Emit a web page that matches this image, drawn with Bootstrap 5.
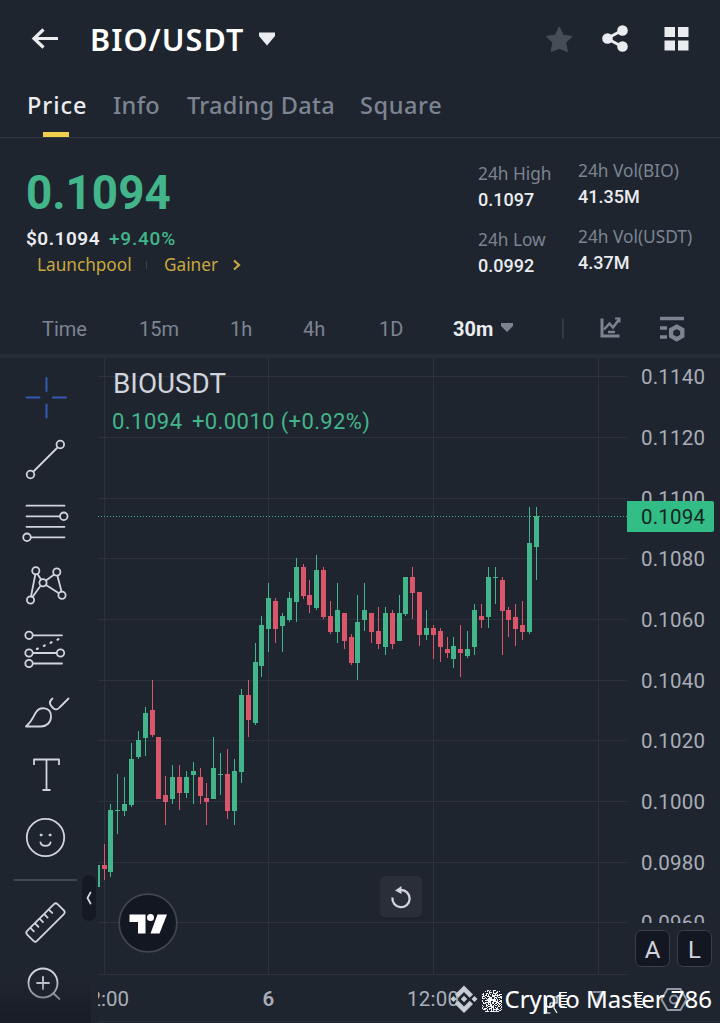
<!DOCTYPE html>
<html lang="en">
<head>
<meta charset="utf-8">
<meta name="viewport" content="width=device-width, initial-scale=1">
<title>BIO/USDT</title>
<link href="https://cdn.jsdelivr.net/npm/bootstrap@5.3.0/dist/css/bootstrap.min.css" rel="stylesheet">
<style>
  :root { --bg:#1f252f; --up:#42b68a; --down:#da566a; --muted:#7d8491; --ink:#eaecef; --icon:#d1d4dc; }
  html, body { height:1023px; overflow:hidden; }
  body { width:720px; background:var(--bg); color:var(--ink); font-family:"Noto Sans","Liberation Sans",sans-serif; }
  svg { display:block; flex:none; }
  .t { white-space:nowrap; flex:none; }
  .topbar { height:78px; padding-left:31px; padding-right:31px; }
  .pair { font-size:30.5px; font-weight:600; line-height:44px; margin-left:31px; width:155px; color:#fff; letter-spacing:1.05px; }
  .tabs { height:60px; padding-left:27px; border-bottom:1px solid #313741; font-size:23.5px; font-weight:500; color:var(--muted); line-height:34px; padding-top:10px; letter-spacing:.3px; }
  .tabs .on { color:var(--ink); letter-spacing:.95px; }
  .bar-on { width:26px; height:5px; background:#f0cf4f; left:16px; top:44px; }
  .summary { height:162px; }
  .price { font-family:Roboto,sans-serif; font-weight:700; font-size:49px; line-height:58px; color:var(--up); margin-top:26px; height:58px; width:160px; transform:scaleX(.935); transform-origin:0 50%; }
  .sub { font-size:19px; line-height:26px; font-weight:600; font-family:Roboto,sans-serif; margin-top:4px; }
  .up { color:var(--up); font-weight:500; }
  .tags { font-size:17.2px; line-height:26px; color:#c9a83f; padding-left:11px; margin-top:0; }
  .tag-sep { width:1px; height:8px; background:#3a414c; }
  .stat-l { font-size:17.3px; line-height:26px; color:var(--muted); }
  .stat-v { font-size:18px; line-height:26px; font-weight:500; font-family:Roboto,sans-serif; height:40px; }
  .intervals { height:55px; padding-top:2px; color:var(--muted); font-size:20px; line-height:30px; font-family:Roboto,"Noto Sans",sans-serif; }
  .s1 { width:83px; letter-spacing:.5px; } .s2 { letter-spacing:.8px; } .g1 { width:109px; } .g2 { margin-left:17px; width:68px; }
  .i1 { margin-left:42px; width:97px; } .i2 { width:91px; } .i3 { width:73px; } .i4 { width:76px; } .i5 { width:74px; }
  .i6 { width:47px; font-weight:700; color:var(--ink); }
  .board { height:668px; }
  .tools { width:98px; padding-top:11px; }
  .tools::after { content:""; left:0; bottom:0; width:91px; height:46px; position:absolute; background:linear-gradient(#171b2400,#171b24e8); pointer-events:none; }
  .tools svg { fill:none; stroke:var(--icon); stroke-width:1.8; stroke-linecap:round; stroke-linejoin:round; }
  .fold { left:82px; top:520px; width:14px; height:46px; border-radius:7px; background:#141923; }
  svg text { font-family:Roboto,sans-serif; }
  .seam { left:0; top:354px; width:720px; height:4px; background:#272d37; }
  .wm { left:444px; top:980px; }
  .wm text { font-family:"Noto Sans","Liberation Sans",sans-serif; }
</style>
</head>
<body class="position-relative">

<header class="topbar d-flex align-items-center">
  <svg width="28" height="24" viewBox="31 27 28 24" fill="none" stroke="#eaecef" stroke-width="3.2"><path d="M58 38.5H34M43.5 29.5l-9.5 9 9.5 9"/></svg>
  <div class="t pair">BIO/USDT</div>
  <svg style="margin-left:13px" width="18" height="16" viewBox="258 31 18 16"><path d="M259 32.5h16v3.500L267 45.500L259 36z" fill="#eaecef"/></svg>
  <svg class="ms-auto" width="30" height="30" viewBox="544 24 30 30"><path d="M559.300 27l4 8.200 8.800 1.200-6.400 6.200 1.700 9-8.100-3.200-8.100 3.200 1.700-9-6.400-6.200 8.800-1.200z" fill="#474d57" stroke="#474d57" stroke-linejoin="round"/></svg>
  <svg style="margin-left:27px" width="30" height="30" viewBox="601 24 30 30" fill="#eaecef"><path d="M622 30.500L607 38.500l15 8" fill="none" stroke="#eaecef" stroke-width="3"/><circle cx="622.500" cy="30.500" r="5.300"/><circle cx="607.500" cy="38.500" r="5.300"/><circle cx="622.500" cy="46.500" r="5.300"/></svg>
  <svg style="margin-left:33px" width="25" height="26" viewBox="664 26 25 26" fill="#eaecef"><path d="M664.500 27h10.500v10h-10.500zM678 27h10.500v10H678zM664.500 40.500h10.500v10h-10.500zM678 40.500h10.500v10H678z"/></svg>
</header>

<nav class="tabs d-flex">
  <div class="t on position-relative" style="width:86px">Price<span class="bar-on position-absolute"></span></div>
  <div class="t" style="width:74px">Info</div>
  <div class="t" style="width:173px">Trading Data</div>
  <div class="t" style="letter-spacing:.6px">Square</div>
</nav>

<section class="summary d-flex">
  <div style="width:478px;padding-left:26px">
    <div class="price t">0.1094</div>
    <div class="sub d-flex"><span class="t s1">$0.1094</span><span class="t up s2">+9.40%</span></div>
    <div class="tags d-flex align-items-center"><span class="t g1">Launchpool</span><span class="tag-sep"></span><span class="t g2">Gainer</span>
      <svg width="10" height="12" viewBox="0 0 10 12" fill="none" stroke="#c9a83f" stroke-width="2.200"><path d="M2 1.500L7 6l-5 4.500"/></svg></div>
  </div>
  <div style="width:100px;padding-top:23px">
    <div class="t stat-l">24h High</div><div class="t stat-v">0.1097</div>
    <div class="t stat-l">24h Low</div><div class="t stat-v">0.0992</div>
  </div>
  <div style="padding-top:20px">
    <div class="t stat-l">24h Vol(BIO)</div><div class="t stat-v">41.35M</div>
    <div class="t stat-l">24h Vol(USDT)</div><div class="t stat-v">4.37M</div>
  </div>
</section>

<section class="intervals d-flex align-items-center">
  <span class="t i1">Time</span><span class="t i2">15m</span><span class="t i3">1h</span><span class="t i4">4h</span><span class="t i5">1D</span><span class="t i6">30m</span>
  <svg width="220" height="40" viewBox="500 308.500 220 40">
    <path d="M501 322.500h12v3l-6 6-6-6z" fill="#7d8491"/>
    <path d="M563 318v20" stroke="#3a414c" stroke-width="1.500"/>
    <g fill="none" stroke="#7d8491" stroke-width="3"><path d="M602 318v17.500h17.500"/><path d="M604 329l5.500-6 3.500 4 6-8" stroke-width="2.500"/><path d="M615 318h4.500v4" stroke-width="2"/><path d="M608 331.500h7" stroke-width="2.500"/><path d="M660 318h24M660 327.500h7M660 336.500h7" stroke-width="3.600"/><path d="M676.700 326.200l5.600 3.100v6.300l-5.600 3.100-5.600-3.100v-6.300z" stroke-width="4.300"/></g>
  </svg>
</section>

<main class="board d-flex">
  <aside class="tools position-relative">
    <svg width="91" height="63" viewBox="0 366 91 63"><path d="M46.500 378v13M46.500 404.500v13M26.500 397.500h13M53 397.500h13" stroke="#3559b5" stroke-width="2"/></svg>
    <svg width="91" height="63" viewBox="0 429 91 63"><path d="M34 471l23-23"/><circle cx="60.300" cy="444.500" r="3.800"/><circle cx="30.500" cy="474.500" r="3.800"/></svg>
    <svg width="91" height="63" viewBox="0 492 91 63"><path d="M26.500 505.700h38M26.500 516.300h33M26.500 526.800h38M31 537.300h33.500"/><circle cx="63.800" cy="516.300" r="3.800"/><circle cx="27" cy="537.300" r="3.800"/></svg>
    <svg width="91" height="63" viewBox="0 555 91 63"><path d="M35.300 574.500l-4.300 22M37.500 574l3.500 5.500M46 580.500l7.500-5.500M57.500 576l4 15.500M46 585l12.500 8M40 586.500l-7.500 10.500"/><circle cx="35.800" cy="570.700" r="3.600"/><circle cx="56.800" cy="572" r="3.600"/><circle cx="43" cy="582.700" r="3.600"/><circle cx="30.500" cy="600" r="3.600"/><circle cx="62" cy="595.200" r="3.600"/></svg>
    <svg width="91" height="63" viewBox="0 618 91 63"><path d="M33 635.300h29M33 653h23.500M33 663.500h29"/><path d="M37 649l23-10.500" stroke-dasharray="1 6.500" stroke-width="2.200"/><circle cx="29" cy="635.300" r="3.700"/><circle cx="29" cy="653" r="3.700"/><circle cx="60.500" cy="653" r="3.700"/><circle cx="29" cy="663.500" r="3.700"/></svg>
    <svg width="91" height="63" viewBox="0 681 91 63"><path d="M26 726.500c6-5 7.500-10 9.500-13.500 4-7 15.500-6.500 15.500 3.500 0 6-4.500 10-10 10z"/><path d="M52.500 698.500c-5 4-2 7 .5 9.500 2.500 2.500 5 1.500 7-1l8.500-8.500"/></svg>
    <svg width="91" height="63" viewBox="0 744 91 63"><path d="M34 765v-5.500h25v5.500M46.500 759.500v30M42.500 790h8" stroke-linecap="butt"/></svg>
    <svg width="91" height="63" viewBox="0 807 91 63"><circle cx="45.500" cy="837.500" r="18.700"/><path d="M40.500 842.500c1 4.500 9 4.500 10 0"/><circle cx="41" cy="835" r="1" fill="#d1d4dc" stroke-width="1"/><circle cx="50" cy="835" r="1" fill="#d1d4dc" stroke-width="1"/></svg>
    <svg width="91" height="21" viewBox="0 870 91 21"><path d="M14.500 880h62" stroke="#424955"/></svg>
    <svg width="91" height="63" viewBox="0 891 91 63"><g transform="rotate(-45 45.500 922.500)"><rect x="24" y="915.500" width="43" height="14" rx="2.500"/><path d="M31 916v4.500M37.500 916v4.500M44 916v4.500M50.500 916v4.500M57 916v4.500"/></g></svg>
    <svg width="91" height="63" viewBox="0 954 91 63"><circle cx="43" cy="983" r="14.500"/><path d="M53.500 993.500l6 5.500M37 983h12M43 977v12"/></svg>
    <div class="fold position-absolute"><svg width="14" height="46" viewBox="0 0 14 46"><path d="M8.500 17.500L5.500 23l3 5.500"/></svg></div>
  </aside>

  <svg id="chart" width="622" height="668" viewBox="98 355 622 668">
    <g id="grid" stroke="#2c313b" stroke-width="1"></g>
    <path d="M98 516.500h529" stroke="#42b68a" stroke-dasharray="1 2"/>
    <g id="candles" shape-rendering="crispEdges"></g>
    <g fill="#d1d4dc"><text x="113" y="393" font-size="27" textLength="113" lengthAdjust="spacingAndGlyphs">BIOUSDT</text></g>
    <g fill="#42b68a" font-size="22"><text x="112" y="429" textLength="70">0.1094</text><text x="192" y="429" textLength="178">+0.0010 (+0.92%)</text></g>
    <g id="axis" fill="#a9aeb8" font-size="20.500"></g>
    <rect x="630" y="923" width="90" height="20" fill="#1f252f"/>
    <path d="M627 501h85q2 0 2 2v27q0 2-2 2h-85z" fill="#32bd87"/>
    <text x="641" y="524" font-size="20.500" textLength="64" fill="#16251f">0.1094</text>
    <circle cx="148" cy="923" r="28.800" fill="#131722" stroke="#42464f" stroke-width="1.700"/>
    <g fill="#fff"><path d="M129.500 914.500h16v19h-7.500v-11.500h-8.500zM157.500 914.500h9.500l-7.500 19h-9z"/><circle cx="150.500" cy="917.500" r="3.500"/></g>
    <rect x="380" y="877" width="42" height="42" rx="5" fill="#1a1f28"/>
    <rect x="380" y="876" width="42" height="41.500" rx="5" fill="#2a2e39"/>
    <path d="M392.500 897.500a8.600 8.600 0 1 0 8.500-7.500" fill="none" stroke="#d1d4dc" stroke-width="2.300"/><path d="M395 890.500l6.500-4.500v8z" fill="#d1d4dc"/>
    <g fill="#131722" stroke="#3a3f4a"><rect x="635.500" y="930.500" width="34" height="36" rx="6"/><rect x="677.500" y="930.500" width="34" height="36" rx="6"/></g>
    <g fill="#d1d4dc" font-size="24" text-anchor="middle"><text x="652.500" y="957.500">A</text><text x="694.500" y="957.500">L</text></g>
    <g fill="#a9aeb8" font-size="20.500"><text x="89.500" y="1006">2:00</text><text x="262.500" y="1006" font-weight="600">6</text><text x="407" y="1006" textLength="52">12:00</text><text x="592" y="1006" font-weight="600" fill="#858b96">7</text></g>
    <path d="M91 1021.500h629" stroke="#2a303a"/>
  </svg>
</main>
<div class="seam position-absolute"></div>

<svg class="wm position-absolute" width="276" height="43" viewBox="444 980 276 43">
  <g fill="#c8ccd4"><path d="M464 985.500l9 9-3.300 3.300-5.700-5.700-5.700 5.700-3.300-3.300zM464 1013l9-9-3.300-3.300-5.700 5.700-5.700-5.700-3.300 3.300zM464 995.800l3.200 3.200-3.200 3.200-3.200-3.200zM453.500 996l3 3-3 3-3-3zM474.500 996l3 3-3 3-3-3z"/></g>
  <path d="M667.500 989h13l6 10.500-6 10.500h-13l-6-10.500z" fill="none" stroke="#9299a5" stroke-width="2"/><circle cx="674" cy="999.500" r="4" fill="none" stroke="#9299a5" stroke-width="2"/>
  <g id="stamp" fill="#eef0f3" shape-rendering="crispEdges"></g>
  <text x="504.500" y="1008" font-size="24" fill="#fff" stroke="#fff" stroke-width=".1" textLength="207.500" lengthAdjust="spacingAndGlyphs">Crypto Master 786</text>
  <g fill="none" stroke="#fff" stroke-width="1.200"><path d="M546.500 997v16h4M550 997h7v6h-7M550 1003v4M554 1004v4l3 5M559 992.500h8M561 995.500h6M559 998.500h8M561 1001.500h6M561 1004.500h6M561 1007.500h6M634 992.500h9M637 995.500h5M634 998.500h8M637 1001.500h5M637 1004.500h6M637 1007.500h6"/></g>
</svg>

<script src="https://cdn.jsdelivr.net/npm/bootstrap@5.3.0/dist/js/bootstrap.bundle.min.js"></script>
<script>
  // x, direction, high, low, body top, body bottom
  const rows = `104 r 844 880 865 869|110 g 804 877 810 872|117 g 774 834 810 811|124 g 777 816 804 811|131 g 743 807 759 805|138 g 731 759 740 757|145 g 707 756 713 738|152 r 680 737 710 735|158 r 737 799 737 799|165 r 776 825 795 802|172 g 765 804 777 799|179 r 765 810 777 793|186 g 771 798 777 793|193 g 762 804 771 775|200 r 768 804 777 796|206 r 783 825 798 802|213 g 737 799 768 799|220 g 753 795 774 775|227 r 749 819 774 811|234 g 759 825 771 811|241 g 689 783 695 772|248 r 680 737 695 720|255 g 643 725 662 723|261 g 616 677 625 666|268 g 583 652 598 629|275 r 598 643 601 629|282 g 613 652 616 626|289 g 592 622 598 620|296 g 558 622 567 602|303 r 564 599 567 596|309 r 580 613 595 605|316 g 555 610 570 608|323 r 567 619 570 617|330 r 601 634 616 632|337 g 583 643 610 632|344 r 613 649 613 641|351 r 634 665 637 663|357 g 595 680 622 663|364 g 583 631 610 620|371 r 613 643 613 632|378 r 607 649 631 644|385 g 607 655 613 647|392 r 610 649 613 644|399 g 595 641 613 641|405 g 577 616 577 614|412 r 567 619 577 593|419 r 592 646 592 635|426 g 610 640 628 635|433 r 625 659 628 635|440 r 628 662 631 647|447 r 637 658 649 653|453 g 637 668 646 659|460 r 625 677 649 653|467 g 631 658 649 656|474 g 604 655 610 647|481 r 604 628 616 620|488 g 567 628 577 617|495 g 567 604 577 578|502 r 577 655 580 611|508 r 607 637 610 620|515 r 604 646 617 629|522 r 601 640 625 632|529 g 507 634 543 632|536 g 507 580 516 547`;
  let out = '<rect x="98" y="865" width="2" height="22" fill="#42b68a"/>';
  for (const r of rows.split('|')) {
    const [x, d, h, l, t, b] = r.split(' ').map((v, i) => i === 1 ? v : +v);
    const c = d === 'g' ? '#42b68a' : '#da566a';
    out += `<rect x="${x}" y="${h}" width="1" height="${l - h}" fill="${c}"/><rect x="${x - 2}" y="${t}" width="5" height="${b - t}" fill="${c}"/>`;
  }
  document.getElementById('candles').innerHTML = out;
  const ys = [376.5, 437.5, 498.5, 558.5, 619.5, 680.5, 740.5, 801.5, 862.5, 922.5];
  const xs = [104.5, 268.5, 433.5, 598.5];
  document.getElementById('grid').innerHTML = [...ys, 974.5].map(y => `<path d="M98 ${y}h529"/>`).join('') + xs.map(x => `<path d="M${x} 355V975"/>`).join('');
  document.getElementById('axis').innerHTML = ys.map((y, i) => `<text x="641" y="${y + 7.5}" textLength="64">${(0.114 - i * 0.002).toFixed(4)}</text>`).join('');
  // speckled avatar next to the author name
  let s = '', n = 7;
  for (let y = 0; y < 22; y++) for (let x = 0; x < 20; x++) {
    n = (n * 1103515245 + 12345) % 2147483648;
    if ((n >> 16) % 100 < 52 && Math.hypot(x - 10, y - 11) < 12.500) s += `<rect x="${482 + x}" y="${990 + y}" width="1" height="1"/>`;
  }
  document.getElementById('stamp').innerHTML = s;
</script>
</body>
</html>
